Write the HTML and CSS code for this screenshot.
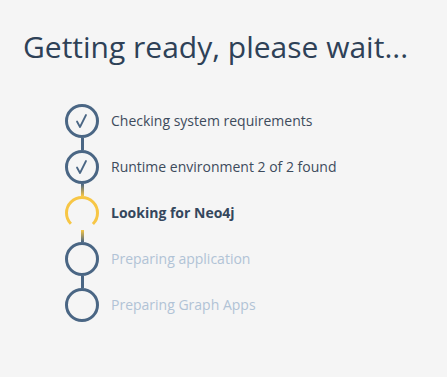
FILE: index.html
```html
<!DOCTYPE html>
<html>
<head>
<meta charset="utf-8">
<link rel="stylesheet" href="styles.css">
</head>
<body>
<div class="page">
  <h1 class="title">Getting ready, please wait...</h1>
  <div class="steps">
    <div class="step done">
      <svg class="icon" viewBox="0 0 34 34" width="34" height="34">
        <circle cx="17" cy="17" r="15.5" fill="none" stroke="#4a6684" stroke-width="3"/>
        <path d="M12 17.5 L15 23 L21 11" fill="none" stroke="#4a6684" stroke-width="1.8" stroke-linecap="round" stroke-linejoin="round"/>
      </svg>
      <span class="label">Checking system requirements</span>
    </div>
    <div class="connector"></div>
    <div class="step done">
      <svg class="icon" viewBox="0 0 34 34" width="34" height="34">
        <circle cx="17" cy="17" r="15.5" fill="none" stroke="#4a6684" stroke-width="3"/>
        <path d="M12 17.5 L15 23 L21 11" fill="none" stroke="#4a6684" stroke-width="1.8" stroke-linecap="round" stroke-linejoin="round"/>
      </svg>
      <span class="label">Runtime environment 2 of 2 found</span>
    </div>
    <div class="connector to-active"></div>
    <div class="step active">
      <svg class="icon" viewBox="0 0 34 34" width="34" height="34">
        <circle cx="17" cy="17" r="15.5" fill="none" stroke="#f7c645" stroke-width="3" stroke-dasharray="73.05 24.35" stroke-dashoffset="-36.5"/>
      </svg>
      <span class="label">Looking for Neo4j</span>
    </div>
    <div class="connector from-active"></div>
    <div class="step pending">
      <svg class="icon" viewBox="0 0 34 34" width="34" height="34">
        <circle cx="17" cy="17" r="15.5" fill="none" stroke="#4a6684" stroke-width="3"/>
      </svg>
      <span class="label">Preparing application</span>
    </div>
    <div class="connector"></div>
    <div class="step pending">
      <svg class="icon" viewBox="0 0 34 34" width="34" height="34">
        <circle cx="17" cy="17" r="15.5" fill="none" stroke="#4a6684" stroke-width="3"/>
      </svg>
      <span class="label">Preparing Graph Apps</span>
    </div>
  </div>
</div>
</body>
</html>
```
FILE: styles.css
```css
html, body {
  margin: 0;
  padding: 0;
  background: #f5f5f5;
}
body {
  font-family: "Open Sans", "Noto Sans", sans-serif;
  width: 447px;
  height: 377px;
  overflow: hidden;
}
.page {
  padding: 26px 0 0 23px;
}
.title {
  margin: 0;
  font-size: 30px;
  font-weight: 400;
  line-height: 41px;
  color: #2e4157;
}
.steps {
  margin-top: 37px;
  padding-left: 42px;
  display: flex;
  flex-direction: column;
}
.step {
  display: flex;
  align-items: center;
  height: 34px;
  gap: 12px;
}
.icon {
  display: block;
  flex: none;
}
.label {
  font-size: 14px;
  line-height: 20px;
  color: #3d4b5c;
}
.step.active .label {
  font-weight: 700;
  color: #34475d;
}
.step.pending .label {
  color: #b1c3d6;
}
.connector {
  width: 3px;
  height: 12px;
  margin-left: 15.5px;
  background: #4a6684;
}
.connector.to-active {
  background: linear-gradient(#4a6684, #f7c645);
}
.connector.from-active {
  background: linear-gradient(#f7c645, #4a6684);
}
```
